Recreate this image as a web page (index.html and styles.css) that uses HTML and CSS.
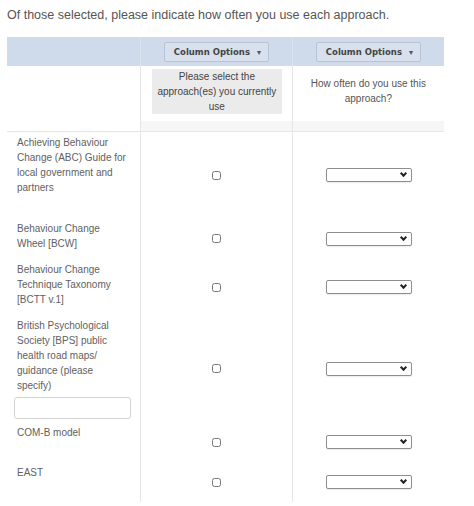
FILE: index.html
```html
<!DOCTYPE html>
<html>
<head>
  <meta charset="UTF-8">
  <link rel="stylesheet" href="styles.css">
</head>
<body>
  <div class="question">
    <p class="question-title">Of those selected, please indicate how often you use each approach.</p>

    <table class="matrix">
      <thead>
        <!-- Column option buttons -->
        <tr class="head-bar">
          <th class="label-col"></th>
          <th><button class="col-opt">Column Options <span class="caret">&#9662;</span></button></th>
          <th><button class="col-opt">Column Options <span class="caret">&#9662;</span></button></th>
        </tr>
        <!-- Column headings -->
        <tr class="head-text">
          <td></td>
          <td><div class="q-box">Please select the approach(es) you currently use</div></td>
          <td><div class="q-text">How often do you use this approach?</div></td>
        </tr>
        <tr class="head-strip">
          <td></td><td></td><td></td>
        </tr>
      </thead>
      <tbody>
        <tr class="row-first">
          <td class="label">Achieving Behaviour Change (ABC) Guide for local government and partners</td>
          <td class="check"><input type="checkbox"></td>
          <td class="pick"><span class="select-wrap"><select><option></option></select></span></td>
        </tr>
        <tr>
          <td class="label">Behaviour Change Wheel [BCW]</td>
          <td class="check"><input type="checkbox"></td>
          <td class="pick"><span class="select-wrap"><select><option></option></select></span></td>
        </tr>
        <tr>
          <td class="label">Behaviour Change Technique Taxonomy [BCTT v.1]</td>
          <td class="check"><input type="checkbox"></td>
          <td class="pick"><span class="select-wrap"><select><option></option></select></span></td>
        </tr>
        <tr>
          <td class="label label-other">
            <span class="other-name">British Psychological Society [BPS] public health road maps/ guidance (please specify)</span>
            <input type="text" class="other-text">
          </td>
          <td class="check"><input type="checkbox"></td>
          <td class="pick"><span class="select-wrap"><select><option></option></select></span></td>
        </tr>
        <tr class="row-short">
          <td class="label">COM-B model</td>
          <td class="check"><input type="checkbox"></td>
          <td class="pick"><span class="select-wrap"><select><option></option></select></span></td>
        </tr>
        <tr class="row-short">
          <td class="label">EAST</td>
          <td class="check"><input type="checkbox"></td>
          <td class="pick"><span class="select-wrap"><select><option></option></select></span></td>
        </tr>
      </tbody>
    </table>
  </div>
</body>
</html>
```

FILE: styles.css
```css
body { margin: 0; background: #fff; font-family: "Liberation Sans", Arial, sans-serif; color: #555; }
.question { padding: 8px 0 0 7px; }
.question-title { margin: 0 0 14px; font-size: 12.5px; line-height: 15px; color: #555; }

.matrix { border-collapse: collapse; width: 437px; table-layout: fixed; font-size: 10px; line-height: 15px; }
.matrix td, .matrix th { padding: 0; }
.matrix .label-col { width: 133px; }
.matrix th + th, .matrix td + td { border-left: 1px solid #e6e6e6; }

/* header bar */
.head-bar th { height: 29px; background: #cfdbea; text-align: center; vertical-align: middle; }
.matrix .head-bar th + th { border-left: 1px solid #dce4ef; }
.col-opt { width: 105px; height: 20px; margin-top: 1px; padding: 0 0 0 2px; background: #d7e0ec; border: 1px solid #b8c4d5; border-radius: 2px; font-family: "DejaVu Sans", sans-serif; font-weight: bold; font-size: 8.5px; color: #454545; cursor: pointer; }
.caret { font-size: 8px; margin-left: 4px; color: #555; }

/* column headings */
.head-text td { height: 55px; vertical-align: top; text-align: center; }
.q-box { margin: 3px 10px 0 11px; height: 45px; background: #ebebeb; color: #444; }
.q-text { padding: 10px 14px 0; color: #555; }
.head-strip td { height: 10px; border-bottom: 1px solid #e6e6e6; }
.head-strip td + td { background: #f6f6f6; }

/* answer rows */
tbody tr { height: 40px; }
tbody tr.row-first { height: 86px; }
.matrix .label { padding: 3px 11px 8px 10px; vertical-align: top; color: #616161; }
.matrix .row-short .label { padding-bottom: 0; }
.matrix .label-other { padding: 3px 10px 3px 7px; }
.other-name { display: block; padding-left: 3px; }
.other-text { display: block; box-sizing: border-box; width: 117px; height: 22px; margin: 4px 0 0; border: 1px solid #d2d2d2; border-radius: 3px; }
.check, .pick { text-align: center; vertical-align: middle; }
.check input { width: 9px; height: 9px; margin: 0; vertical-align: middle; }

.select-wrap { position: relative; display: inline-block; margin-left: 1px; vertical-align: middle; line-height: 0; }
.select-wrap select { -webkit-appearance: none; appearance: none; box-sizing: border-box; width: 86px; height: 14px; margin: 0; padding: 0; background: #fff; border: 1px solid #8e8e8e; border-radius: 2px; box-shadow: 0 1px 1px rgba(0,0,0,0.08); }
.select-wrap::after { content: ""; position: absolute; right: 6px; top: 3px; width: 3px; height: 3px; border-right: 2px solid #222; border-bottom: 2px solid #222; transform: rotate(45deg); pointer-events: none; }
```
